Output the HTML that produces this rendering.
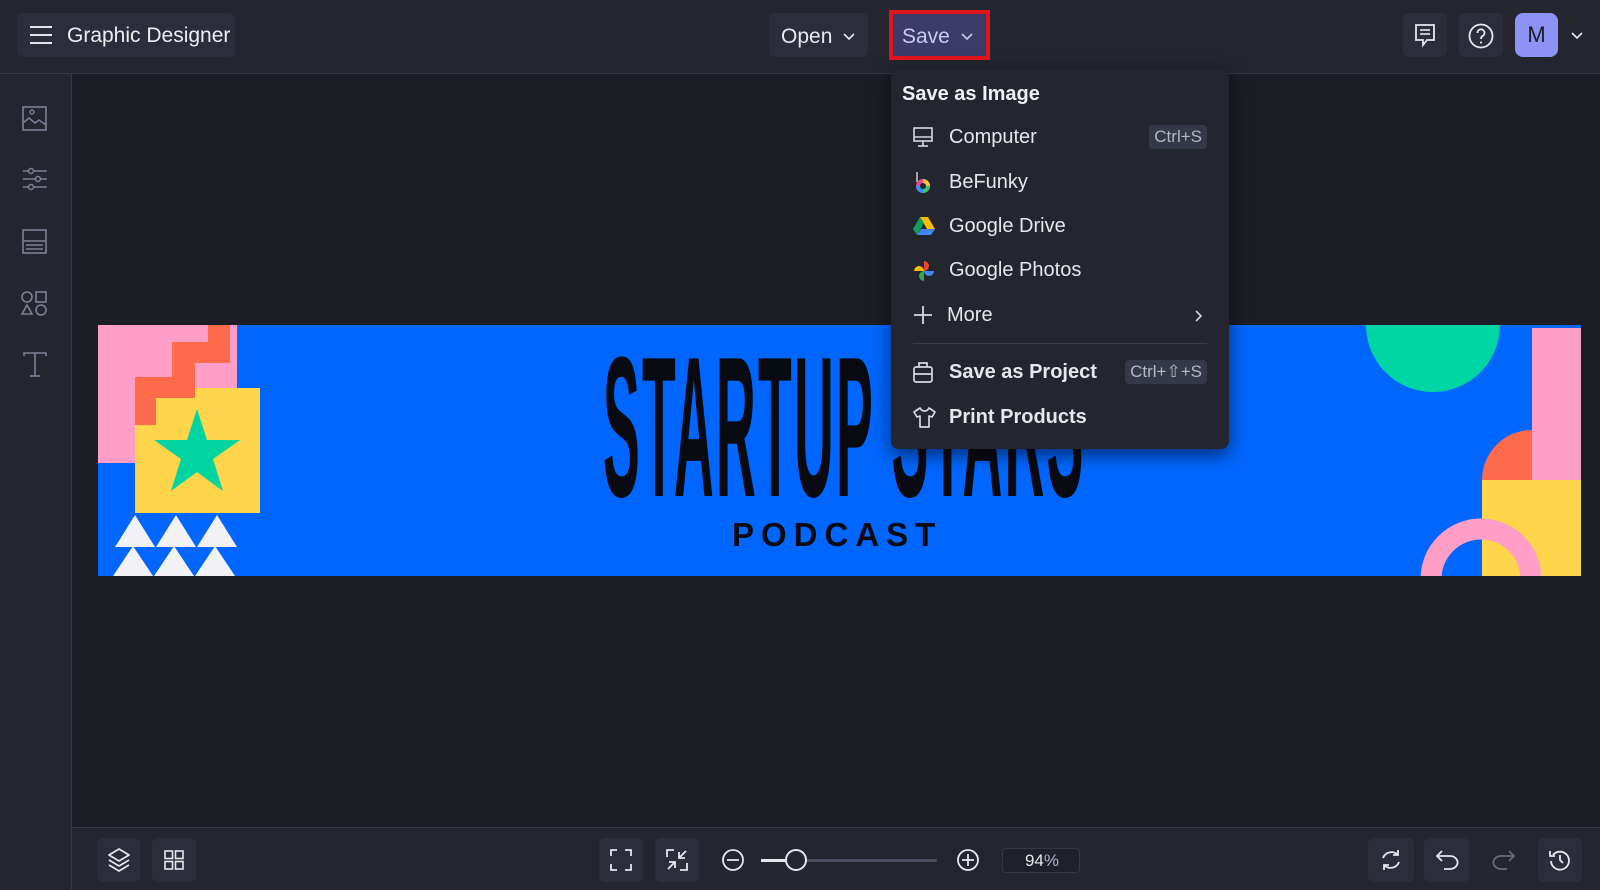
<!DOCTYPE html>
<html><head><meta charset="utf-8"><style>
*{margin:0;padding:0;box-sizing:border-box}
body{width:1600px;height:890px;overflow:hidden;background:#1c1d25;font-family:"Liberation Sans",sans-serif;color:#e8e9ee;position:relative}
.abs{position:absolute}
.top{left:0;top:0;width:1600px;height:74px;background:#23252f;border-bottom:1px solid #343744}
.side{left:0;top:74px;width:72px;height:816px;background:#23252f;border-right:1px solid #343744}
.bottom{left:72px;top:827px;width:1528px;height:63px;background:#23252f;border-top:1px solid #343744}
.btn{background:#2b2e3a;border-radius:6px}
.menu{left:891px;top:69px;width:338px;height:380px;background:#23252f;border-radius:8px;box-shadow:0 6px 18px rgba(0,0,0,.55)}
.item{position:absolute;left:0;width:338px;font-size:20px;color:#e6e7ec}
.item .t{position:absolute;left:58px;top:-12px}
.item svg{position:absolute;left:22px;top:-11px}
.chip{position:absolute;right:22px;top:-13px;background:#353846;border-radius:4px;padding:2px 5px;font-size:17px;color:#b4b7c4}
svg{overflow:visible}
</style></head><body>
<div class="abs top"></div>
<div class="abs side"></div>

<!-- header -->
<div class="abs btn" style="left:17px;top:13px;width:218px;height:44px"></div>
<svg class="abs" style="left:29px;top:25px" width="24" height="20"><g stroke="#e6e7ec" stroke-width="2"><line x1="1" y1="2" x2="23" y2="2"/><line x1="1" y1="10" x2="23" y2="10"/><line x1="1" y1="18" x2="23" y2="18"/></g></svg>
<div class="abs" style="left:67px;top:24px;font-size:21px;color:#eceef2">Graphic Designer</div>

<div class="abs btn" style="left:769px;top:13px;width:99px;height:44px"></div>
<div class="abs" style="left:781px;top:25px;font-size:21px">Open</div>
<svg class="abs" style="left:843px;top:33px" width="12" height="8"><path d="M1 1l5 5 5-5" stroke="#e6e7ec" stroke-width="1.6" fill="none"/></svg>

<div class="abs" style="left:889px;top:10px;width:101px;height:50px;border:4px solid #e3151c;background:#3a3b66"></div>
<div class="abs" style="left:902px;top:25px;font-size:21px;color:#c9cbf5">Save</div>
<svg class="abs" style="left:961px;top:33px" width="12" height="8"><path d="M1 1l5 5 5-5" stroke="#c9cbf5" stroke-width="1.6" fill="none"/></svg>

<div class="abs btn" style="left:1403px;top:13px;width:44px;height:44px"></div>
<svg class="abs" style="left:1414px;top:24px" width="22" height="24"><path d="M2 1h18v15h-7l-4 5v-5H2z" stroke="#e6e7ec" stroke-width="1.8" fill="none"/><line x1="6" y1="6" x2="16" y2="6" stroke="#e6e7ec" stroke-width="1.6"/><line x1="6" y1="10" x2="16" y2="10" stroke="#e6e7ec" stroke-width="1.6"/></svg>
<div class="abs btn" style="left:1459px;top:13px;width:44px;height:44px"></div>
<svg class="abs" style="left:1468px;top:23px" width="26" height="26"><circle cx="13" cy="13" r="11.5" stroke="#e6e7ec" stroke-width="1.8" fill="none"/><path d="M9.5 10a3.5 3.5 0 1 1 5 3c-1.3.7-1.5 1.5-1.5 3" stroke="#e6e7ec" stroke-width="1.8" fill="none"/><circle cx="13" cy="19.5" r="1.1" fill="#e6e7ec"/></svg>
<div class="abs" style="left:1515px;top:13px;width:43px;height:44px;background:#8c93f5;border-radius:8px;font-size:22px;color:#1c1d25;text-align:center;line-height:44px">M</div>
<svg class="abs" style="left:1571px;top:32px" width="12" height="8"><path d="M1 1l5 5 5-5" stroke="#e6e7ec" stroke-width="1.6" fill="none"/></svg>

<!-- sidebar icons -->
<svg class="abs" style="left:22px;top:106px" width="26" height="26"><rect x="1" y="1" width="23" height="23" stroke="#7d8194" stroke-width="1.6" fill="none"/><circle cx="10" cy="6" r="2" stroke="#7d8194" stroke-width="1.4" fill="none"/><path d="M1 17l6-5 6 5 4-3 7 5" stroke="#7d8194" stroke-width="1.5" fill="none"/></svg>
<svg class="abs" style="left:22px;top:168px" width="26" height="24"><g stroke="#7d8194" stroke-width="1.5" fill="none"><line x1="1" y1="3" x2="25" y2="3"/><line x1="1" y1="11" x2="25" y2="11"/><line x1="1" y1="19" x2="25" y2="19"/><circle cx="9" cy="3" r="2.5" fill="#23252f"/><circle cx="16" cy="11" r="2.5" fill="#23252f"/><circle cx="9" cy="19" r="2.5" fill="#23252f"/></g></svg>
<svg class="abs" style="left:22px;top:229px" width="26" height="26"><g stroke="#7d8194" stroke-width="1.6" fill="none"><rect x="1" y="1" width="23" height="23"/><line x1="1" y1="12" x2="24" y2="12"/><line x1="4" y1="16" x2="21" y2="16"/><line x1="4" y1="20" x2="21" y2="20"/></g></svg>
<svg class="abs" style="left:21px;top:290px" width="28" height="28"><g stroke="#7d8194" stroke-width="1.6" fill="none"><circle cx="6" cy="7" r="5"/><rect x="15" y="2" width="10" height="10"/><path d="M1 24l5-9 5 9z"/><circle cx="20" cy="20" r="5"/></g></svg>
<svg class="abs" style="left:23px;top:352px" width="24" height="26"><g stroke="#7d8194" stroke-width="1.6" fill="none"><path d="M1 4V1h22v3"/><line x1="12" y1="1" x2="12" y2="24"/><line x1="7" y1="24" x2="17" y2="24"/></g></svg>

<!-- banner -->
<div class="abs" style="left:98px;top:325px;width:1483px;height:251px;background:#0066fe;overflow:hidden">
<svg width="1483" height="251" style="position:absolute;left:0;top:0">
<rect x="0" y="0" width="139" height="138" fill="#ff9fc8"/>
<rect x="37" y="63" width="125" height="125" fill="#ffd54b"/>
<g fill="#ff6b4a"><rect x="110" y="0" width="22" height="38"/><rect x="74" y="17" width="58" height="21"/><rect x="74" y="17" width="23" height="56"/><rect x="37" y="52" width="60" height="21"/><rect x="37" y="52" width="21" height="48"/></g>
<path d="M99 84l10 31h33l-27 19 10 32-26-19-26 19 10-32-27-19h33z" fill="#00d4a1"/>
<g fill="#f2f2f5"><path d="M17 222l20-32 20 32zM58 222l20-32 20 32zM99 222l20-32 20 32zM15 251l20-30 20 30zM56 251l20-30 20 30zM97 251l20-30 20 30z"/></g>
<circle cx="1335" cy="0" r="67" fill="#00d6a4"/>
<rect x="1434" y="3" width="49" height="152" fill="#ff9fc8"/>
<path d="M1384 155a50 50 0 0 1 50-50v50z" fill="#ff6b4a"/>
<rect x="1384" y="155" width="99" height="96" fill="#ffd54b"/>
<circle cx="1383" cy="254" r="50" fill="none" stroke="#ff9fc8" stroke-width="21"/>
</svg>
<div style="position:absolute;left:505px;top:-12px;font-size:200px;font-weight:bold;color:#0a0a12;transform:scaleX(0.276);transform-origin:0 0;white-space:nowrap;letter-spacing:8px">STARTUP STARS</div>
<div style="position:absolute;left:634px;top:191px;font-size:33px;font-weight:bold;color:#0a0a12;letter-spacing:7px">PODCAST</div>
</div>

<!-- menu -->
<div class="abs menu">
<div style="position:absolute;left:11px;top:14px;font-size:20px;font-weight:bold;color:#f0f1f4">Save as Image</div>
<div class="item" style="top:69px"><svg width="20" height="22"><g stroke="#d8d9e0" stroke-width="1.6" fill="none"><rect x="1" y="1" width="18" height="13"/><line x1="1" y1="10" x2="19" y2="10"/><line x1="10" y1="14" x2="10" y2="19"/><line x1="5" y1="19" x2="15" y2="19"/></g></svg><span class="t">Computer</span><span class="chip">Ctrl+S</span></div>
<div class="item" style="top:114px"><svg width="20" height="22"><line x1="4" y1="0" x2="4" y2="10" stroke="#d8d9e0" stroke-width="1.4"/><circle cx="10" cy="14" r="7" fill="#e04b8f"/><path d="M10 7a7 7 0 0 1 7 7h-7z" fill="#f6c33d"/><path d="M17 14a7 7 0 0 1-7 7v-7z" fill="#3fbf6f"/><path d="M10 21a7 7 0 0 1-7-7h7z" fill="#3a8ef0"/><circle cx="10" cy="14" r="3" fill="#23252f"/></svg><span class="t">BeFunky</span></div>
<div class="item" style="top:158px"><svg width="22" height="20"><path d="M7 1h8l7 12h-8z" fill="#fbbc04"/><path d="M7 1l-7 12 4 6 7-12z" fill="#0f9d58"/><path d="M4 19h14l4-6H8z" fill="#4285f4"/></svg><span class="t">Google Drive</span></div>
<div class="item" style="top:202px"><svg width="22" height="22"><path d="M11 11V1a5 5 0 0 1 0 10z" fill="#ea4335"/><path d="M11 11h10a5 5 0 0 1-10 0z" fill="#4285f4"/><path d="M11 11v10a5 5 0 0 1 0-10z" fill="#34a853"/><path d="M11 11H1a5 5 0 0 1 10 0z" fill="#fbbc04"/></svg><span class="t">Google Photos</span></div>
<div class="item" style="top:247px"><svg width="20" height="20"><g stroke="#d8d9e0" stroke-width="1.8"><line x1="10" y1="1" x2="10" y2="19"/><line x1="1" y1="10" x2="19" y2="10"/></g></svg><span class="t" style="left:56px">More</span><svg style="left:304px;top:-6px" width="8" height="12"><path d="M1 1l5 5-5 5" stroke="#d8d9e0" stroke-width="1.6" fill="none"/></svg></div>
<div style="position:absolute;left:22px;top:274px;width:294px;height:1px;background:#3a3d4a"></div>
<div class="item" style="top:304px;font-weight:bold"><svg width="20" height="22"><g stroke="#d8d9e0" stroke-width="1.7" fill="none"><rect x="1" y="5" width="18" height="15" rx="2"/><path d="M6 5V1h8v4"/><line x1="1" y1="12" x2="19" y2="12"/></g></svg><span class="t">Save as Project</span><span class="chip" style="font-weight:normal">Ctrl+⇧+S</span></div>
<div class="item" style="top:349px;font-weight:bold"><svg width="22" height="22"><path d="M7 1l-6 4 3 5 3-1v11h9V9l3 1 3-5-6-4c-1 2-2.5 3-4.5 3S8 3 7 1z" stroke="#d8d9e0" stroke-width="1.7" fill="none" stroke-linejoin="round"/></svg><span class="t">Print Products</span></div>
</div>

<!-- bottom bar -->
<div class="abs bottom"></div>
<div class="abs btn" style="left:97px;top:838px;width:43px;height:44px"></div>
<svg class="abs" style="left:107px;top:848px" width="24" height="24"><g stroke="#e6e7ec" stroke-width="1.7" fill="none" stroke-linejoin="round"><path d="M12 1l10 6-10 6L2 7z"/><path d="M2 12l10 6 10-6"/><path d="M2 17l10 6 10-6"/></g></svg>
<div class="abs btn" style="left:152px;top:838px;width:44px;height:44px"></div>
<svg class="abs" style="left:164px;top:850px" width="20" height="20"><g stroke="#e6e7ec" stroke-width="1.6" fill="none"><rect x="1" y="1" width="7.5" height="7.5"/><rect x="11.5" y="1" width="7.5" height="7.5"/><rect x="1" y="11.5" width="7.5" height="7.5"/><rect x="11.5" y="11.5" width="7.5" height="7.5"/></g></svg>

<div class="abs btn" style="left:599px;top:838px;width:44px;height:44px"></div>
<svg class="abs" style="left:610px;top:849px" width="22" height="22"><g stroke="#e6e7ec" stroke-width="1.8" fill="none"><path d="M1 7V1h6M15 1h6v6M21 15v6h-6M7 21H1v-6"/></g></svg>
<div class="abs btn" style="left:655px;top:838px;width:44px;height:44px"></div>
<svg class="abs" style="left:666px;top:849px" width="22" height="22"><g stroke="#e6e7ec" stroke-width="1.8" fill="none"><path d="M1 8V1h7M21 14v7h-7M13 9l7-7M13 3v6h6M9 13l-7 7M3 13h6v6"/></g></svg>
<svg class="abs" style="left:722px;top:849px" width="22" height="22"><circle cx="11" cy="11" r="10" stroke="#e6e7ec" stroke-width="1.8" fill="none"/><line x1="5" y1="11" x2="17" y2="11" stroke="#e6e7ec" stroke-width="1.8"/></svg>
<div class="abs" style="left:761px;top:859px;width:176px;height:3px;background:#4a4e5e;border-radius:2px"></div>
<div class="abs" style="left:761px;top:859px;width:30px;height:3px;background:#e6e7ec"></div>
<div class="abs" style="left:785px;top:849px;width:22px;height:22px;border-radius:50%;border:2px solid #e6e7ec;background:#23252f"></div>
<svg class="abs" style="left:957px;top:849px" width="22" height="22"><circle cx="11" cy="11" r="10" stroke="#e6e7ec" stroke-width="1.8" fill="none"/><line x1="5" y1="11" x2="17" y2="11" stroke="#e6e7ec" stroke-width="1.8"/><line x1="11" y1="5" x2="11" y2="17" stroke="#e6e7ec" stroke-width="1.8"/></svg>
<div class="abs" style="left:1002px;top:848px;width:78px;height:25px;border:1px solid #343744;border-radius:4px;background:#1f2029;font-size:17px;text-align:right;padding-right:20px;line-height:23px;color:#e6e7ec">94<span style="color:#b0b4d8">%</span></div>

<div class="abs btn" style="left:1368px;top:838px;width:46px;height:44px"></div>
<svg class="abs" style="left:1380px;top:849px" width="22" height="22"><g stroke="#e6e7ec" stroke-width="1.8" fill="none"><path d="M18 6a9 9 0 0 0-15 3M4 16a9 9 0 0 0 15-3"/><path d="M18 1v5h-5M4 21v-5h5"/></g></svg>
<div class="abs btn" style="left:1424px;top:838px;width:45px;height:44px"></div>
<svg class="abs" style="left:1435px;top:850px" width="24" height="20"><path d="M7 1L2 6l5 5M2 6h13a7 6 0 0 1 0 13H9" stroke="#e6e7ec" stroke-width="1.8" fill="none"/></svg>
<svg class="abs" style="left:1492px;top:850px" width="24" height="20"><path d="M17 1l5 5-5 5M22 6H9a7 6 0 0 0 0 13h6" stroke="#686c7c" stroke-width="1.8" fill="none"/></svg>
<div class="abs btn" style="left:1538px;top:838px;width:44px;height:44px"></div>
<svg class="abs" style="left:1549px;top:849px" width="22" height="22"><g stroke="#e6e7ec" stroke-width="1.8" fill="none"><path d="M4 6a9 9 0 1 1-2 6"/><path d="M1 2v5h5"/><path d="M11 6v5l3 3"/></g></svg>
</body></html>
